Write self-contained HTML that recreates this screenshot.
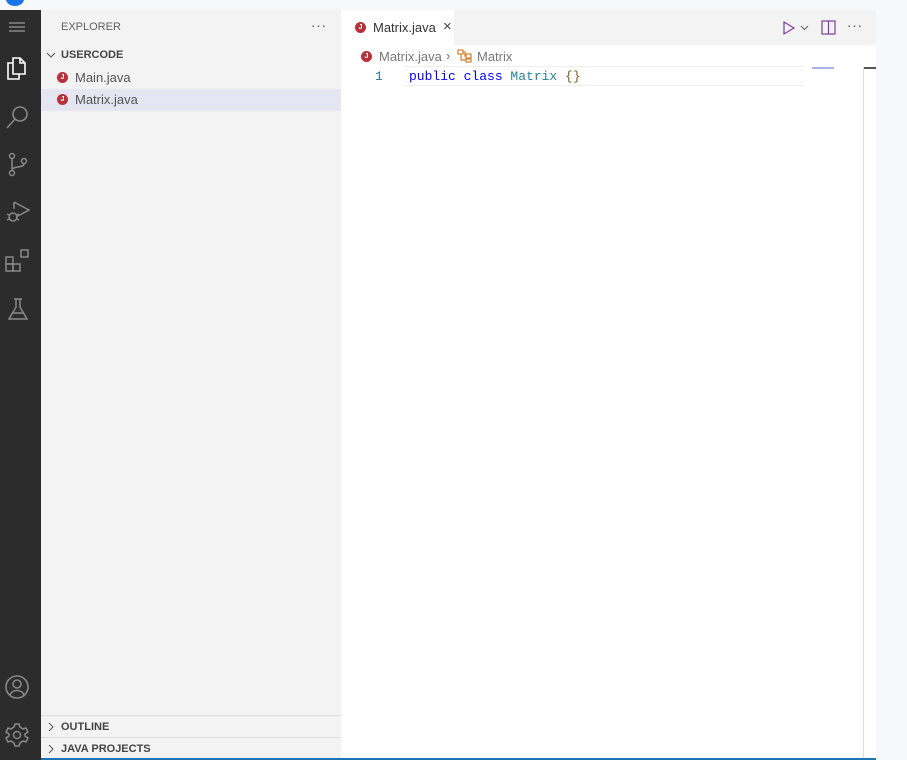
<!DOCTYPE html>
<html><head><style>
*{margin:0;padding:0;box-sizing:border-box}
body{width:907px;height:760px;position:relative;overflow:hidden;background:#f7f8fa;font-family:"Liberation Sans",sans-serif}
.abs{position:absolute}
.act{left:0;top:10px;width:41px;height:750px;background:#2c2c2c}
.side{left:41px;top:10px;width:300px;height:750px;background:#f3f3f3}
.ed{left:341px;top:10px;width:535px;height:750px;background:#fff}
.tabs{left:341px;top:10px;width:535px;height:35px;background:#f3f3f3}
.tab{left:341px;top:10px;width:113px;height:35px;background:#fff}
.jic{position:absolute;display:block;width:11px;height:11px;border-radius:50%;background:#b8313a;color:#fff;font-size:7px;font-weight:bold;text-align:center;line-height:11px}
.t{font-size:13px;color:#555}
.mono{font-family:"Liberation Mono",monospace;font-size:13px}
svg{position:absolute}
</style></head><body>
<div class="abs" style="left:6px;top:-8px;width:18px;height:14px;border-radius:50%;background:#1a73e8"></div>
<div class="abs act"></div>
<div class="abs side"></div>
<div class="abs ed"></div>
<div class="abs tabs"></div>
<div class="abs tab"></div>
<!-- activity icons -->
<svg style="left:8px;top:20px" width="18" height="14" stroke="#999" stroke-width="1.2"><path d="M1 3H17M1 7H17M1 11H17"/></svg>
<svg style="left:5px;top:55px" width="24" height="26" fill="none" stroke="#fff" stroke-width="1.6"><path d="M8 3H15L20 8V19H8Z M15 3V8H20 M8 8H3V24H14V19"/></svg>
<svg style="left:5px;top:104px" width="26" height="26" fill="none" stroke="#888" stroke-width="1.6"><circle cx="15" cy="10" r="7"/><path d="M10 15L2 24"/></svg>
<svg style="left:5px;top:151px" width="24" height="26" fill="none" stroke="#888" stroke-width="1.5"><circle cx="7" cy="5" r="2.5"/><circle cx="7" cy="22" r="2.5"/><circle cx="19" cy="10" r="2.5"/><path d="M7 8V19M19 13C19 17 7 15 7 19"/></svg>
<svg style="left:4px;top:199px" width="28" height="28" fill="none" stroke="#888" stroke-width="1.5"><path d="M10 3V10M10 3L25 11L12 18"/><circle cx="9" cy="18" r="4"/><path d="M3 15L5 16M3 21L5 20M15 15L13 16M15 21L13 20"/></svg>
<svg style="left:4px;top:248px" width="28" height="28" fill="none" stroke="#888" stroke-width="1.5"><rect x="2" y="9" width="7" height="7"/><rect x="2" y="16" width="7" height="7"/><rect x="9" y="16" width="7" height="7"/><rect x="17" y="2" width="7" height="7"/></svg>
<svg style="left:6px;top:297px" width="24" height="26" fill="none" stroke="#888" stroke-width="1.5"><path d="M8 2H16M10 2V10L3 22H21L14 10V2M6 16H18"/></svg>
<svg style="left:4px;top:674px" width="26" height="26" fill="none" stroke="#888" stroke-width="1.6"><circle cx="13" cy="13" r="11"/><circle cx="13" cy="10" r="4"/><path d="M6 21C8 15 18 15 20 21"/></svg>
<svg style="left:4px;top:722px" width="26" height="26" fill="none" stroke="#888" stroke-width="1.5"><circle cx="13" cy="13" r="3.5"/><path d="M11 2H15L16 5L19 7L22 6L24 10L21 12V14L24 16L22 20L19 19L16 21L15 24H11L10 21L7 19L4 20L2 16L5 14V12L2 10L4 6L7 7L10 5Z"/></svg>
<!-- sidebar -->
<div class="abs" style="left:61px;top:21px;font-size:11px;color:#616161">EXPLORER</div>
<div class="abs" style="left:311px;top:18px;font-size:13px;color:#444;letter-spacing:1px">···</div>
<svg style="left:46px;top:51px" width="10" height="8" fill="none" stroke="#555" stroke-width="1"><path d="M1 2L5 6L9 2"/></svg>
<div class="abs" style="left:61px;top:49px;font-size:11px;font-weight:bold;color:#444">USERCODE</div>
<span class="jic" style="left:57px;top:72px">J</span>
<div class="abs t" style="left:75px;top:70px;font-size:13px">Main.java</div>
<div class="abs" style="left:41px;top:89px;width:300px;height:22px;background:#e4e6f1"></div>
<span class="jic" style="left:57px;top:94px">J</span>
<div class="abs t" style="left:75px;top:92px">Matrix.java</div>
<div class="abs" style="left:41px;top:715px;width:300px;height:1px;background:#ddd"></div>
<div class="abs" style="left:41px;top:737px;width:300px;height:1px;background:#ddd"></div>
<svg style="left:47px;top:722px" width="8" height="10" fill="none" stroke="#555"><path d="M2 1L6 5L2 9"/></svg>
<div class="abs" style="left:61px;top:721px;font-size:11px;font-weight:bold;color:#444">OUTLINE</div>
<svg style="left:47px;top:744px" width="8" height="10" fill="none" stroke="#555"><path d="M2 1L6 5L2 9"/></svg>
<div class="abs" style="left:61px;top:743px;font-size:11px;font-weight:bold;color:#444">JAVA PROJECTS</div>
<div class="abs" style="left:41px;top:758px;width:835px;height:2px;background:#1f74b5"></div>
<!-- tab -->
<span class="jic" style="left:355px;top:22px">J</span>
<div class="abs" style="left:373px;top:20px;font-size:13px;color:#333">Matrix.java</div>
<div class="abs" style="left:443px;top:18px;font-size:15px;color:#444">×</div>
<svg style="left:782px;top:20px" width="14" height="16" fill="none" stroke="#7a3e9d" stroke-width="1.2"><path d="M2 2L12 8L2 14Z"/></svg>
<svg style="left:800px;top:25px" width="9" height="6" fill="none" stroke="#666"><path d="M1 1L4.5 4.5L8 1"/></svg>
<svg style="left:821px;top:20px" width="15" height="15" fill="none" stroke="#7a3e9d" stroke-width="1.2"><rect x="1" y="1" width="13" height="13"/><path d="M7.5 1V14"/></svg>
<div class="abs" style="left:847px;top:18px;font-size:13px;color:#444;letter-spacing:1px">···</div>
<!-- breadcrumb -->
<span class="jic" style="left:361px;top:51px">J</span>
<div class="abs" style="left:379px;top:49px;font-size:13px;color:#777">Matrix.java</div>
<div class="abs" style="left:446px;top:48px;font-size:13px;color:#777">›</div>
<svg style="left:457px;top:49px" width="16" height="14" fill="none" stroke="#d67e2c" stroke-width="1.2"><rect x="1" y="1" width="5" height="4"/><rect x="9" y="5" width="5" height="4"/><rect x="9" y="10" width="5" height="3"/><path d="M4 5V11H9M6 3H8V7H9"/></svg>
<div class="abs" style="left:477px;top:49px;font-size:13px;color:#777">Matrix</div>
<!-- code -->
<div class="abs" style="left:404px;top:66px;width:400px;height:20px;border-top:1px solid #eee;border-bottom:1px solid #eee"></div>
<div class="abs mono" style="left:375px;top:69px;color:#237893">1</div>
<div class="abs mono" style="left:409px;top:69px;white-space:pre"><span style="color:#0000ff">public class </span><span style="color:#267f99">Matrix</span> <span style="color:#795e26">{}</span></div>
<div class="abs" style="left:812px;top:67px;width:22px;height:2px;background:#aab0e8"></div>
<div class="abs" style="left:863px;top:67px;width:13px;height:2px;background:#555"></div>
<div class="abs" style="left:863px;top:67px;width:1px;height:691px;background:#ddd"></div>
</body></html>
